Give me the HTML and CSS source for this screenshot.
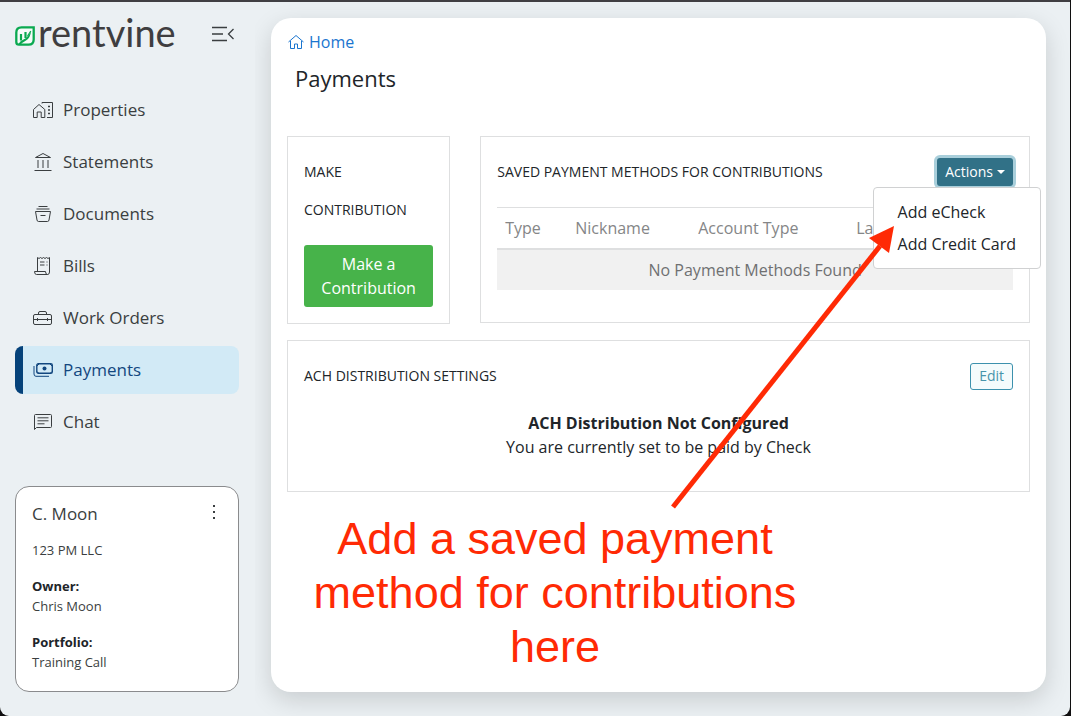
FILE: index.html
```html
<!DOCTYPE html>
<html lang="en">
<head>
<meta charset="utf-8">
<title>Payments</title>
<link rel="stylesheet" href="styles.css">
</head>
<body>
<div class="shell">
  <aside class="sidebar">
    <header class="brand">
      <a class="logo" href="#">
        <svg class="logo-mark" viewBox="0 0 20 20" aria-hidden="true">
          <path d="M6.500 1.300H18.700V13.500Q18.700 18.700 13.500 18.700H4Q1.300 18.700 1.300 16V6.500Q1.300 1.300 6.500 1.300Z" fill="#f6fbf9" stroke="#0aa950" stroke-width="2.300"/>
          <path d="M6 8V14.500M10.500 6V12" fill="none" stroke="#0aa950" stroke-width="2.200"/>
          <path d="M3 18.500Q5.500 14.500 8.500 13.500Q13 11.500 16 5Q15.500 12 11 14.500Q7.500 16.500 5.500 18.500Z" fill="#0aa950" stroke="none"/>
          <path d="M12.500 10L15.800 5" fill="none" stroke="#0aa950" stroke-width="1.200"/>
        </svg>
        <span class="logo-text">rentvine</span>
      </a>
      <button class="collapse" type="button" aria-label="Collapse menu">
        <svg viewBox="0 0 24 16" width="24" height="16"><path d="M1 1.500H16M1 8H12M1 14.500H16" stroke-width="1.500"/><path d="M22.500 3L17.500 8L22.500 13" stroke-width="1.300"/></svg>
      </button>
    </header>
    <nav class="nav">
      <a class="nav-item" href="#"><svg viewBox="0 0 20 20"><path d="M9 3.500V2.500H19.500V17.500H14M.5 9.500L6 4.500L11.800 9.500V17.500H8.200V12H4.200V17.500H.5Z"/><path d="M15 6.500H17M15 10H17M15 13.500H17" stroke-width="1.500"/></svg>Properties</a>
      <a class="nav-item" href="#"><svg viewBox="0 0 20 20"><path d="M2.500 5.500L10 1.500L17.500 5.500ZM1.500 18.500H18.500"/><path d="M5 8V16M10 8V16M15 8V16"/></svg>Statements</a>
      <a class="nav-item" href="#"><svg viewBox="0 0 20 20"><path d="M5.500 2.500H14.500M3.500 5H16.500M2.500 7.500H17.500L16 16Q15.800 17.500 14.500 17.500H5.500Q4.200 17.500 4 16ZM7.500 11.500H12.500"/></svg>Documents</a>
      <a class="nav-item" href="#"><svg viewBox="0 0 20 20"><path d="M4.500 15V1.500L6 2.500L7.500 1.500L9 2.500L10.500 1.500L12 2.500L13.500 1.500L15 2.500L16.500 1.500V16Q16.500 18.500 14.500 18.500H3.500Q1.500 18.500 1.500 15.500H12.500Q12.500 18.500 14.500 18.500M7 6H11.500M7 9H11.500M13.500 6H14.500M13.500 9H14.500"/></svg>Bills</a>
      <a class="nav-item" href="#"><svg viewBox="0 0 20 20"><rect x=".5" y="6.500" width="18" height="10" rx="1.500"/><path d="M5.500 6.500V5Q5.500 3.500 7 3.500H12Q13.500 3.500 13.500 5V6.500M.5 11.500H18.500M4.500 10V13M14.500 10V13"/></svg>Work Orders</a>
      <a class="nav-item active" href="#" aria-current="page"><svg viewBox="0 0 20 20"><rect x="3.800" y="3.800" width="15.500" height="9.500" rx="1.500" stroke-width="1.400"/><circle cx="11.500" cy="8.500" r="2" fill="currentColor" stroke="none"/><path d="M4 6L6 4M17 4L19 6M4 11.500L6 13.500M17 13.500L19 11.500"/><path d="M1 6V14Q1 16.300 3 16.300H16"/></svg>Payments</a>
      <a class="nav-item" href="#"><svg viewBox="0 0 20 20"><path d="M1.500 17.500V3.500Q1.500 2.500 2.500 2.500H17.500Q18.500 2.500 18.500 3.500V14.500Q18.500 15.500 17.500 15.500H3.500ZM4.500 5.800H15.500M4.500 8.800H15.500M4.500 11.800H11.500"/></svg>Chat</a>
    </nav>
    <section class="profile">
      <div class="profile-head">
        <span class="profile-name">C. Moon</span>
        <button class="more" type="button" aria-label="Account options"><svg viewBox="0 0 4 16" width="4" height="16"><path d="M1 2H3M1 8H3M1 14H3" stroke-width="2"/></svg></button>
      </div>
      <div>123 PM LLC</div>
      <dl><dt>Owner:</dt><dd>Chris Moon</dd></dl>
      <dl><dt>Portfolio:</dt><dd>Training Call</dd></dl>
    </section>
  </aside>

  <main class="main">
    <div class="panel">
      <a class="crumb" href="#"><svg viewBox="0 0 16 16" width="16" height="16"><path d="M.5 8L8 1.500L15.500 8M2.500 7V14.500H6.500V10H9.500V14.500H13.500V7"/></svg>Home</a>
      <h1>Payments</h1>
      <div class="cards">
        <section class="card contribute">
          <h2>Make Contribution</h2>
          <button class="btn-green" type="button">Make a Contribution</button>
        </section>
        <section class="card methods">
          <div class="card-head">
            <h2>Saved Payment Methods for Contributions</h2>
            <div class="actions">
              <button class="btn-teal" type="button" aria-expanded="true">Actions<span class="caret"></span></button>
              <div class="menu">
                <a href="#">Add eCheck</a>
                <a href="#">Add Credit Card</a>
              </div>
            </div>
          </div>
          <table>
            <colgroup><col class="c-type"><col class="c-nick"><col class="c-acct"><col></colgroup>
            <thead><tr><th>Type</th><th>Nickname</th><th>Account Type</th><th>La</th></tr></thead>
            <tbody><tr><td colspan="4">No Payment Methods Found</td></tr></tbody>
          </table>
        </section>
        <section class="card ach">
          <div class="card-head">
            <h2>ACH Distribution Settings</h2>
            <button class="btn-edit" type="button">Edit</button>
          </div>
          <p><strong>ACH Distribution Not Configured</strong><br>You are currently set to be paid by Check</p>
        </section>
      </div>
      <p class="note">Add a saved payment method for contributions here</p>
      <svg class="arrow" viewBox="0 0 230 290" aria-hidden="true"><path d="M3 287L210 26" stroke="#ff2a05" stroke-width="5" fill="none"/><path d="M224 6L219 33L199 18Z" fill="#ff2a05" stroke="none"/></svg>
    </div>
  </main>
</div>
</body>
</html>
```
FILE: styles.css
```css
* { box-sizing: border-box; }
body {
  margin: 0;
  background: #100f10;
  color: #212529;
  font: 16px/24px "Open Sans", "Noto Sans", sans-serif;
}
h1, h2, p, dl, dd { margin: 0; font-weight: 400; }
a { color: inherit; text-decoration: none; }
button { font: inherit; border: 0; padding: 0; background: none; cursor: pointer; }
svg { fill: none; stroke: currentColor; flex: none; }

.shell {
  display: flex;
  min-height: 100vh;
  margin-right: 1px;
  border-top: 2px solid #403f43;
  border-radius: 0 0 9px 9px;
  background: #ebf0f3;
  overflow: hidden;
}
.sidebar {
  display: flex;
  flex-direction: column;
  flex: none;
  width: 255px;
  padding: 20px 16px 24px 15px;
  color: #3a3e40;
}
.brand { display: flex; align-items: flex-start; justify-content: space-between; height: 28px; padding-right: 4px; }
.logo { display: flex; align-items: center; gap: 3px; height: 20px; color: #3f3e40; }
.logo-mark { width: 20px; height: 20px; margin-top: 8px; }
.logo-text { font: 38px/28px Lato, sans-serif; }
.collapse { height: 24px; color: #3a3e40; }
.collapse svg { display: block; }

.nav { display: flex; flex-direction: column; gap: 4px; margin-top: 36px; }
.nav-item {
  display: flex;
  align-items: center;
  gap: 10px;
  height: 48px;
  padding-left: 10px;
  border-left: 8px solid transparent;
  border-radius: 8px;
  font-size: 17px;
}
.nav-item svg { width: 20px; height: 20px; }
.nav-item.active { background: #d2eaf6; border-left-color: #05427a; color: #12477f; }

.profile {
  display: flex;
  flex-direction: column;
  gap: 16px;
  margin-top: auto;
  padding: 17px 16px 19px;
  border: 1px solid #8a8b8d;
  border-radius: 14px;
  background: #fff;
  font-size: 13px;
  line-height: 20px;
}
.profile-head { display: flex; justify-content: space-between; }
.profile-name { font-size: 17px; }
.more { height: 16px; margin-right: 6px; color: #3a3e40; }
.more svg { display: block; }
dt { font-weight: 700; color: #212529; }

.main { display: flex; flex: 1; min-width: 0; padding: 16px 24px 24px 16px; overflow: hidden; }
.panel {
  position: relative;
  flex: 1;
  min-width: 0;
  padding: 12px 16px 16px;
  border-radius: 20px;
  background: #fff;
  box-shadow: 0 8px 24px rgba(0, 0, 0, .15);
}
.crumb { display: inline-flex; align-items: center; gap: 5px; padding-left: 1px; color: #1a75cf; }
h1 { padding-left: 8px; margin-top: 6px; font-size: 22px; line-height: 32px; }

.cards {
  display: grid;
  grid-template-columns: repeat(12, minmax(0, 1fr));
  align-items: start;
  gap: 16px 30px;
  margin-top: 42px;
}
.card { padding: 16px; border: 1px solid #dedfe0; }
.contribute { grid-column: span 3; }
.methods { grid-column: span 9; padding-bottom: 32px; }
.ach { grid-column: span 12; padding-bottom: 32px; }
h2 { font-size: 14px; line-height: 38px; text-transform: uppercase; }
.card-head { display: flex; justify-content: space-between; align-items: center; margin-bottom: 16px; }

.btn-green {
  display: block;
  width: 100%;
  margin-top: 16px;
  padding: 7px 12px;
  border-radius: 3px;
  background: #47b34a;
  color: #fff;
}
.actions { position: relative; }
.btn-teal {
  display: flex;
  align-items: center;
  gap: 4px;
  height: 28px;
  padding: 0 8px;
  border-radius: 3px;
  background: #317187;
  box-shadow: 0 0 0 3px #a9cfdb;
  color: #fff;
  font-size: 14px;
}
.caret { border: 4px solid transparent; border-top-color: #fff; border-bottom: 0; }
.menu {
  position: absolute;
  z-index: 1;
  top: 29px;
  right: -28px;
  padding: 8px 0;
  border: 1px solid #d0d1d2;
  border-radius: 4px;
  background: #fff;
  white-space: nowrap;
}
.menu a { display: block; padding: 4px 24px; }

table { width: 100%; table-layout: fixed; border-collapse: separate; border-spacing: 0; color: #6f7071; }
.c-type { width: 70px; }
.c-nick { width: 123px; }
.c-acct { width: 158px; }
th { padding: 8px; border-top: 1px solid #dedfe0; border-bottom: 2px solid #dedfe0; font-weight: 400; text-align: left; color: #858687; }
td { padding: 8px; background: #f1f1f1; text-align: center; }

.btn-edit {
  height: 27px;
  padding: 0 8px;
  border: 1px solid #3c91ad;
  border-radius: 3px;
  background: #f4fbfc;
  color: #4794ab;
  font-size: 14px;
  line-height: 20px;
}
.ach p { text-align: center; }
strong { font-weight: 700; }

.note {
  width: 500px;
  max-width: 100%;
  margin: 20px 0 0 18px;
  color: #ff2a05;
  font: 45px/54px "Liberation Sans", Arial, sans-serif;
  text-align: center;
}
.arrow { position: absolute; z-index: 2; top: 202px; right: 146px; width: 230px; height: 290px; pointer-events: none; }
```
